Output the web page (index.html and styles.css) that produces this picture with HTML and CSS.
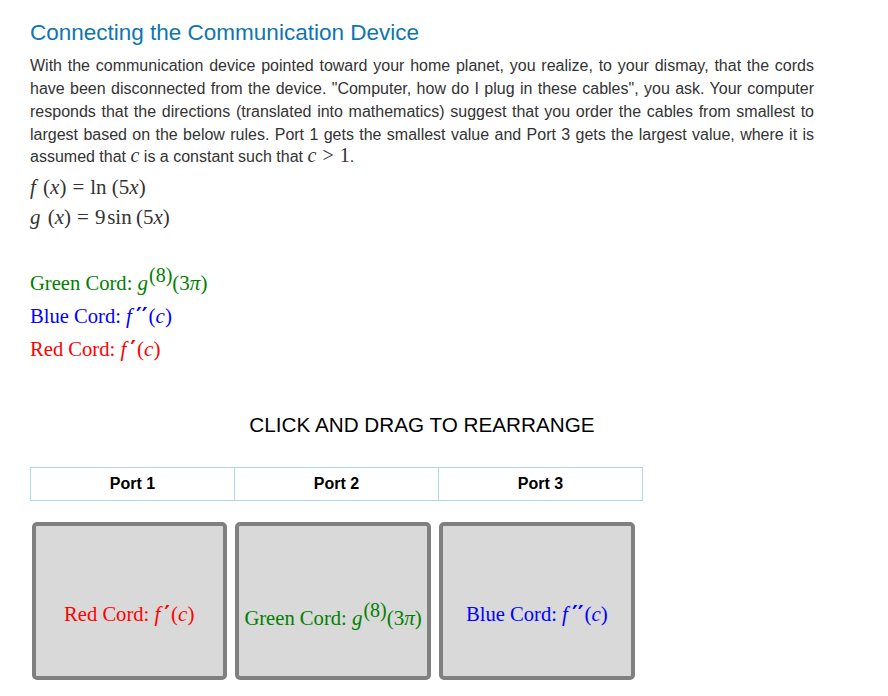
FILE: index.html
```html
<!DOCTYPE html>
<html lang="en">
<head>
    <meta charset="UTF-8">
    <meta name="viewport" content="width=device-width, initial-scale=1.0">
    <title>Connecting the Communication Device</title>
    <link rel="stylesheet" href="styles.css">
</head>
<body>

    <div class="page">
        <h1 class="title">Connecting the Communication Device</h1>

        <p class="intro">With the communication device pointed toward your home planet, you realize, to your dismay, that the cords have been disconnected from the device. "Computer, how do I plug in these cables", you ask. Your computer responds that the directions (translated into mathematics) suggest that you order the cables from smallest to largest based on the below rules. Port 1 gets the smallest value and Port 3 gets the largest value, where it is assumed that <span class="math"><i>c</i></span> is a constant such that <span class="math"><i>c</i><span class="rel">&gt;</span>1</span>.</p>

        <!-- Functions -->
        <div class="formulas">
            <div class="math expr"><i class="fn">f</i> (<i>x</i>)<span class="rel">=</span>ln (5<i>x</i>)</div>
            <div class="math expr"><i class="fn">g</i> (<i>x</i>)<span class="rel">=</span>9&hairsp;sin&thinsp;(5<i>x</i>)</div>
        </div>

        <!-- Cords -->
        <div class="cords">
            <div class="math green">Green Cord: <span class="expr"><i>g</i><sup>(8)</sup>(3<i>π</i>)</span></div>
            <div class="math blue">Blue Cord: <span class="expr"><i class="fn">f</i><span class="prime">′′</span>(<i>c</i>)</span></div>
            <div class="math red">Red Cord: <span class="expr"><i class="fn">f</i><span class="prime">′</span>(<i>c</i>)</span></div>
        </div>

        <div class="hint">CLICK AND DRAG TO REARRANGE</div>

        <table class="ports">
            <tr>
                <th>Port 1</th>
                <th>Port 2</th>
                <th>Port 3</th>
            </tr>
        </table>

        <div class="cards">
            <div class="card math red">
                <span>Red Cord: <span class="expr"><i class="fn">f</i><span class="prime">′</span>(<i>c</i>)</span></span>
            </div>
            <div class="card tall math green">
                <span>Green Cord: <span class="expr"><i>g</i><sup>(8)</sup>(3<i>π</i>)</span></span>
            </div>
            <div class="card math blue">
                <span>Blue Cord: <span class="expr"><i class="fn">f</i><span class="prime">′′</span>(<i>c</i>)</span></span>
            </div>
        </div>
    </div>

</body>
</html>
```

FILE: styles.css
```css
body {
    font-family: "Liberation Sans", Arial, sans-serif;
    background-color: #fff;
    color: #333;
    margin: 0;
}

.page {
    width: 784px;
    padding: 18px 0 0 30px;
}

.title {
    font-size: 22.5px;
    font-weight: normal;
    line-height: 30px;
    color: #0f75ae;
    margin: 0 0 7px 0;
}

.intro {
    font-size: 16px;
    line-height: 22.86px;
    text-align: justify;
    margin: 0 0 4px 0;
}

.math {
    font-family: "Liberation Serif", "Times New Roman", serif;
    font-size: 20.6px;
}

.intro .math {
    font-size: 20px;
    line-height: 0;
}

.expr {
    font-size: 21px;
}

.rel {
    margin: 0 6px;
}

.fn {
    padding-right: 2px;
}

.formulas .math {
    line-height: 29.5px;
}

.cords {
    margin-top: 35px;
}

.cords .math {
    line-height: 32.8px;
}

.green {
    color: #008000;
}

.blue {
    color: #00f;
}

.red {
    color: #f00;
}

sup {
    font-size: 20px;
    line-height: 0;
    vertical-align: 8px;
    margin: 0 0 0 1px;
}

.prime {
    font-family: "DejaVu Sans", sans-serif;
    font-size: 22px;
    font-weight: bold;
    line-height: 0;
    margin: 0 1px 0 2px;
}

.hint {
    font-size: 20.7px;
    line-height: 24px;
    color: #000;
    text-align: center;
    margin-top: 47px;
}

.ports {
    width: 613px;
    table-layout: fixed;
    border-collapse: collapse;
    margin-top: 30px;
}

.ports th {
    border: 1px solid #add8e6;
    height: 32px;
    padding: 0;
    font-size: 16px;
    color: #000;
}

.cards {
    display: flex;
    gap: 8.33px;
    margin: 21px 0 0 1.5px;
}

.card {
    box-sizing: border-box;
    width: 195.5px;
    height: 158px;
    background-color: #d9d9d9;
    border: 4px solid #808080;
    border-radius: 5px;
    display: flex;
    align-items: center;
    justify-content: center;
    white-space: nowrap;
    padding-top: 28px;
}

.card.tall {
    padding-top: 36px;
}
```
